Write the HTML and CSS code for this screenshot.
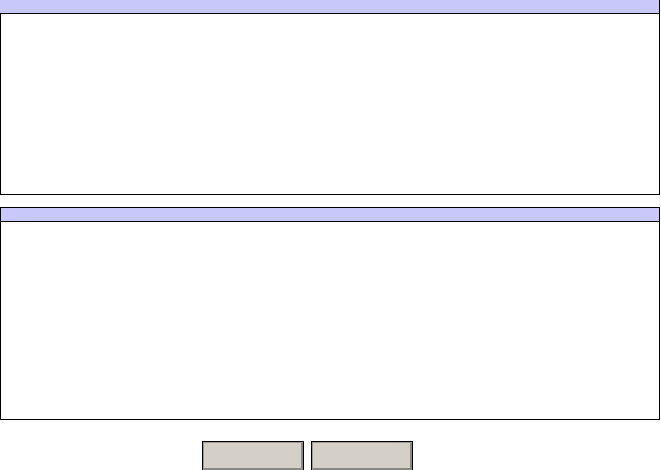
FILE: index.html
```html
<!DOCTYPE html>
<html>
<head>
<meta charset="utf-8">
<link rel="stylesheet" href="styles.css">
</head>
<body>
<div class="page">
  <div class="panel panel-first">
    <div class="panel-header"></div>
    <div class="panel-body panel-body-first"></div>
  </div>
  <div class="panel panel-second">
    <div class="panel-header"></div>
    <div class="panel-body panel-body-second"></div>
  </div>
  <div class="actions">
    <button class="btn" type="button"></button>
    <button class="btn" type="button"></button>
  </div>
</div>
</body>
</html>
```
FILE: styles.css
```css
html, body {
  margin: 0;
  padding: 0;
  background: #ffffff;
  font-family: "Liberation Sans", Arial, sans-serif;
  overflow: hidden;
}
.page {
  width: 661px;
  display: flex;
  flex-direction: column;
}
.panel {
  width: 658px;
  border: 1px solid #000000;
  display: flex;
  flex-direction: column;
}
.panel-first {
  width: 659px;
  margin-top: -1px;
  border-left: none;
}
.panel-second {
  margin-top: 12px;
}
.panel-header {
  height: 13px;
  background: #c8c8fa;
  border-bottom: 1px solid #000000;
}
.panel-body {
  background: #ffffff;
}
.panel-body-first {
  height: 180px;
  border-left: 1px solid #000000;
}
.panel-body-second {
  height: 197px;
}
.actions {
  display: flex;
  gap: 7px;
  padding-left: 202px;
  margin-top: 21px;
}
.btn {
  width: 102px;
  height: 30px;
  margin: 0;
  padding: 0;
  background: #d4d0c8;
  border: 1px solid #000000;
  box-shadow: inset 1px 1px 0 #9a9891, inset -2px -2px 0 #8a8882;
  border-radius: 0;
}
```
